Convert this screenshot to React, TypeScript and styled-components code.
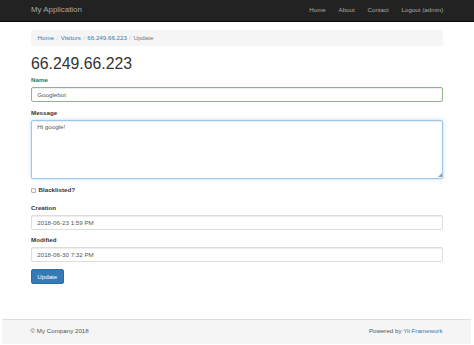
import React from "react";
import styled, { createGlobalStyle } from "styled-components";

const GlobalStyle = createGlobalStyle`
  html, body {
    margin: 0;
    padding: 0;
    height: 100%;
    background: #fff;
  }
  body {
    font-family: "Liberation Sans", Arial, sans-serif;
    font-size: 6.2px;
    line-height: 8.8px;
    color: #333;
  }
  #root {
    height: 100%;
  }
`;

const Wrap = styled.div`
  display: flex;
  flex-direction: column;
  min-height: 100vh;
`;

const Container = styled.div`
  width: 412px;
  margin: 0 auto;
`;

const Navbar = styled.nav`
  height: 22px;
  background: #222;
  border-bottom: 1px solid #080808;
  box-sizing: border-box;
`;

const NavInner = styled(Container)`
  display: flex;
  align-items: center;
  justify-content: space-between;
  height: 100%;
`;

const Brand = styled.a`
  font-size: 7.9px;
  color: #a8a8a8;
  text-decoration: none;
`;

const NavList = styled.ul`
  display: flex;
  list-style: none;
  margin: 0 -6.6px 0 0;
  padding: 0;
`;

const NavLink = styled.a`
  display: block;
  padding: 0 6.4px;
  color: #a8a8a8;
  font-size: 6.2px;
  text-decoration: none;
`;

const Main = styled(Container)`
  flex: 1;
  padding-top: 8.4px;
`;

const Breadcrumb = styled.ul`
  display: flex;
  list-style: none;
  margin: 0 0 8.4px;
  padding: 3.5px 6.6px;
  background: #f5f5f5;
  border-radius: 2px;
`;

const Crumb = styled.li<{ $active?: boolean }>`
  color: ${(p) => (p.$active ? "#777" : "#337ab7")};
  &:not(:first-child)::before {
    content: "/";
    padding: 0 2.4px;
    color: #ccc;
  }
`;

const Title = styled.h1`
  font-size: 15.8px;
  line-height: 17.4px;
  font-weight: 500;
  margin: 0 0 4px;
`;

const FormGroup = styled.div<{ $gap?: number }>`
  margin-bottom: ${(p) => p.$gap ?? 6.6}px;
`;

const Label = styled.label<{ $success?: boolean }>`
  display: block;
  font-weight: bold;
  margin-bottom: 2.2px;
  color: ${(p) => (p.$success ? "#3c763d" : "#333")};
`;

const Input = styled.input<{ $success?: boolean }>`
  display: block;
  width: 100%;
  height: 15px;
  box-sizing: border-box;
  padding: 2.6px 5.3px;
  font-family: "Liberation Sans", Arial, sans-serif;
  font-size: 6.2px;
  color: #555;
  background: #fff;
  border: 1px solid ${(p) => (p.$success ? "#8fb48f" : "#ddd")};
  border-radius: 2px;
  box-shadow: inset 0 1px 1px rgba(0, 0, 0, 0.075);
  outline: none;
`;

const AreaBox = styled.div`
  position: relative;
`;

const TextArea = styled.textarea`
  display: block;
  width: 100%;
  height: 59px;
  box-sizing: border-box;
  padding: 2.6px 5.3px;
  font-family: "Liberation Sans", Arial, sans-serif;
  font-size: 6.2px;
  line-height: 8.8px;
  color: #555;
  border: 1px solid #9ec8ea;
  border-radius: 2px;
  box-shadow: inset 0 1px 1px rgba(0, 0, 0, 0.075), 0 0 3.5px rgba(102, 175, 233, 0.5);
  outline: none;
  resize: none;
`;

const Grip = styled.svg`
  position: absolute;
  right: 1.5px;
  bottom: 1.5px;
  width: 4px;
  height: 4px;
`;

const CheckRow = styled.label`
  display: flex;
  align-items: center;
  gap: 3px;
  margin: 7.5px 0 8.7px;
  height: 8.8px;
  font-weight: bold;
`;

const CheckBox = styled.span`
  width: 4.5px;
  height: 4.5px;
  box-sizing: border-box;
  border: 1px solid #b5b5b5;
  border-radius: 1px;
  background: #f4f4f4;
`;

const Button = styled.button`
  height: 15px;
  padding: 0 5.3px;
  font-family: "Liberation Sans", Arial, sans-serif;
  font-size: 6.2px;
  color: #fff;
  background: #337ab7;
  border: 1px solid #2e6da4;
  border-radius: 2px;
`;

const Footer = styled.footer`
  height: 25px;
  margin: 0 3px 1.5px 2px;
  background: #f5f5f5;
  border-top: 1px solid #ddd;
  box-sizing: border-box;
  color: #555;
`;

const FooterInner = styled(Container)`
  display: flex;
  justify-content: space-between;
  align-items: center;
  height: 100%;
  width: 412px;
`;

const Link = styled.a`
  color: #337ab7;
  text-decoration: none;
`;

export default function App() {
  return (
    <>
      <GlobalStyle />
      <Wrap>
        <Navbar>
          <NavInner>
            <Brand href="#">My Application</Brand>
            <NavList>
              {["Home", "About", "Contact", "Logout (admin)"].map((item) => (
                <li key={item}>
                  <NavLink href="#">{item}</NavLink>
                </li>
              ))}
            </NavList>
          </NavInner>
        </Navbar>
        <Main>
          <Breadcrumb>
            <Crumb>Home</Crumb>
            <Crumb>Visitors</Crumb>
            <Crumb>66.249.66.223</Crumb>
            <Crumb $active>Update</Crumb>
          </Breadcrumb>
          <Title>66.249.66.223</Title>
          <FormGroup>
            <Label $success>Name</Label>
            <Input $success readOnly value="Googlebot" />
          </FormGroup>
          <FormGroup $gap={0}>
            <Label>Message</Label>
            <AreaBox>
              <TextArea readOnly value="Hi google!" />
              <Grip viewBox="0 0 4 4">
                <path d="M4 0 L4 4 L0 4 Z" fill="#9a9a9a" />
              </Grip>
            </AreaBox>
          </FormGroup>
          <CheckRow>
            <CheckBox />
            Blacklisted?
          </CheckRow>
          <FormGroup>
            <Label>Creation</Label>
            <Input readOnly value="2018-06-23 1:59 PM" />
          </FormGroup>
          <FormGroup>
            <Label>Modified</Label>
            <Input readOnly value="2018-06-30 7:32 PM" />
          </FormGroup>
          <Button>Update</Button>
        </Main>
        <Footer>
          <FooterInner>
            <span>© My Company 2018</span>
            <span>
              Powered by <Link href="#">Yii Framework</Link>
            </span>
          </FooterInner>
        </Footer>
      </Wrap>
    </>
  );
}
